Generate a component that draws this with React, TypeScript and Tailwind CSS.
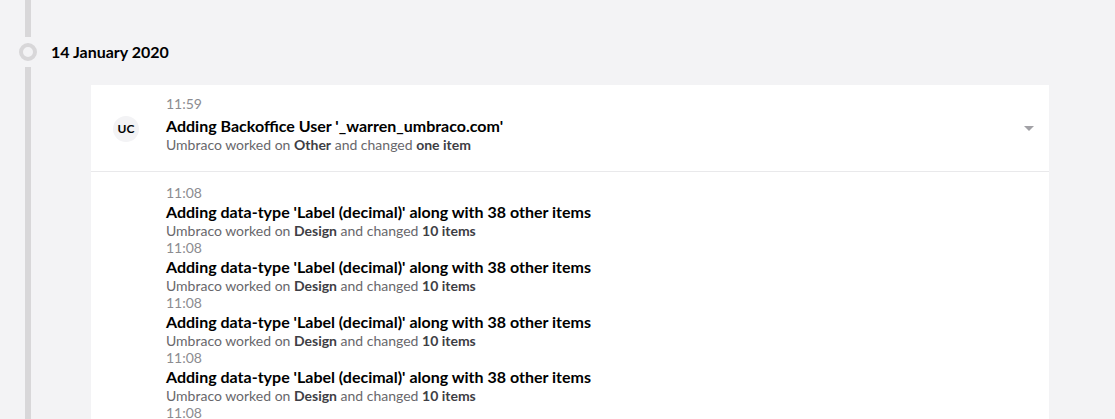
import React from 'react';

const items = Array.from({ length: 5 }, () => ({
  time: '11:08',
  title: "Adding data-type 'Label (decimal)' along with 38 other items",
  area: 'Design',
  changed: '10 items',
}));

const Summary = ({ area, changed }: { area: string; changed: string }) => (
  <div className="text-[14px] leading-[16px] text-[#68676b]">
    Umbraco worked on <span className="font-bold text-[#3e3e45]">{area}</span> and changed{' '}
    <span className="font-bold text-[#3e3e45]">{changed}</span>
  </div>
);

export default function App() {
  return (
    <div className="h-screen overflow-hidden bg-[#f3f3f5] font-['Lato',sans-serif] text-[#1b1b1d]">
      {/* line above the date marker */}
      <div className="ml-[25px] h-[37px] w-[6px] bg-[#d8d7d9]" />

      <div className="flex h-[30px] items-center">
        <div className="ml-[19px] h-[18px] w-[18px] rounded-full border-[4px] border-[#d8d7d9]" />
        <h3 className="ml-[14px] text-[16px] font-bold leading-none text-black">14 January 2020</h3>
      </div>

      <div className="flex">
        <div className="ml-[25px] h-[600px] w-[6px] shrink-0 bg-[#d8d7d9]" />

        <div className="ml-[60px] mt-[18px] w-[958px] self-start bg-white">
          {/* first entry */}
          <div className="flex border-b border-[#e9e9eb] pb-[18px] pl-[22px] pr-[15px] pt-[10px]">
            <div className="mt-[21px] flex h-[26px] w-[26px] shrink-0 items-center justify-center rounded-full bg-[#f3f3f5] text-[12px] font-bold text-black">
              UC
            </div>
            <div className="ml-[27px] flex-1">
              <div className="text-[14px] leading-[17px] text-[#8c8c90]">11:59</div>
              <div className="mt-[3px] text-[16px] font-bold leading-[22px] text-black">
                Adding Backoffice User '_warren_umbraco.com'
              </div>
              <Summary area="Other" changed="one item" />
            </div>
            <div className="mt-[31px] h-0 w-0 border-x-[5px] border-t-[5px] border-x-transparent border-t-[#a2a1a6]" />
          </div>

          {/* grouped entries */}
          <div className="pb-4 pl-[75px] pt-[12px]">
            {items.map((item, i) => (
              <div key={i}>
                <div className="text-[14px] leading-[17px] text-[#8c8c90]">{item.time}</div>
                <div className="text-[16px] font-bold leading-[22px] text-black">{item.title}</div>
                <Summary area={item.area} changed={item.changed} />
              </div>
            ))}
          </div>
        </div>
      </div>
    </div>
  );
}
